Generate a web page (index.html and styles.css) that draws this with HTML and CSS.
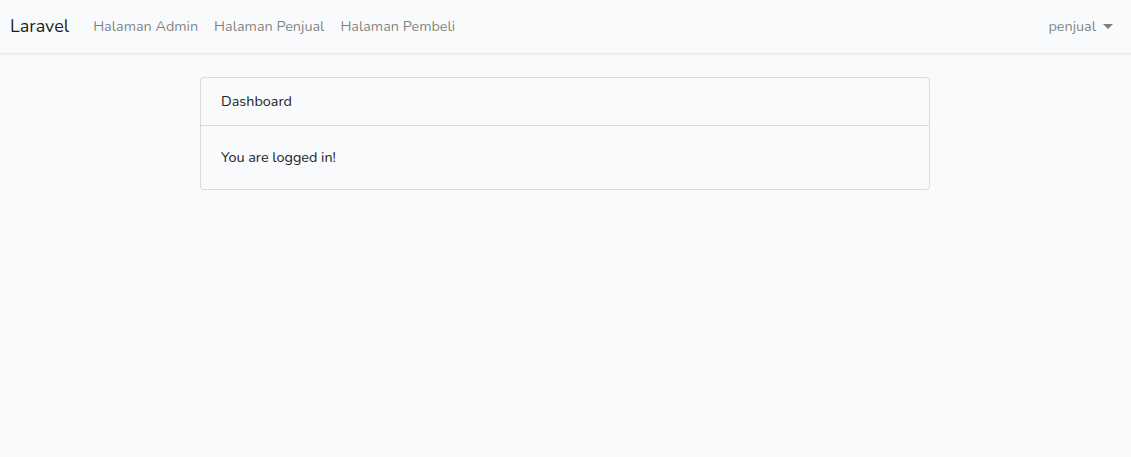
FILE: index.html
```html
<!DOCTYPE html>
<html lang="id">
<head>
<meta charset="utf-8">
<title>Laravel</title>
<link rel="stylesheet" href="styles.css">
</head>
<body>
<nav class="navbar">
  <a class="brand" href="#">Laravel</a>
  <ul class="nav-links">
    <li><a class="nav-link" href="#">Halaman Admin</a></li>
    <li><a class="nav-link" href="#">Halaman Penjual</a></li>
    <li><a class="nav-link" href="#">Halaman Pembeli</a></li>
  </ul>
  <div class="user">
    <a class="nav-link dropdown" href="#">penjual<span class="caret"></span></a>
  </div>
</nav>
<main class="main">
  <div class="card">
    <div class="card-header">Dashboard</div>
    <div class="card-body">You are logged in!</div>
  </div>
</main>
</body>
</html>
```
FILE: styles.css
```css
* { box-sizing: border-box; }
html, body { margin: 0; }
body {
  background: #f8fafc;
  font-family: "Nunito", "Lato", "Noto Sans", sans-serif;
  font-size: 14.4px;
  line-height: 1.6;
  color: #212529;
  height: 457px;
}
a { text-decoration: none; }
.navbar {
  display: flex;
  align-items: center;
  height: 54px;
  padding: 0 10px;
  border-bottom: 1px solid #e5e7ea;
  box-shadow: 0 1px 2px rgba(0,0,0,.04);
}
.brand {
  font-size: 18px;
  color: rgba(0,0,0,.9);
  margin-right: 16px;
  line-height: 1.2;
}
.nav-links {
  display: flex;
  list-style: none;
  margin: 0;
  padding: 0;
  flex: 1;
}
.nav-link {
  display: block;
  padding: 8px;
  color: rgba(0,0,0,.5);
}
.user { display: flex; }
.dropdown { display: flex; align-items: center; }
.caret {
  display: inline-block;
  margin-left: 7px;
  width: 0; height: 0;
  border-top: 5px solid rgba(0,0,0,.5);
  border-left: 5px solid transparent;
  border-right: 5px solid transparent;
}
.main {
  display: flex;
  justify-content: center;
  padding-top: 23px;
  padding-right: 1px;
}
.card {
  width: 730px;
  border: 1px solid rgba(0,0,0,.125);
  border-radius: 4px;
}
.card-header {
  padding: 12px 20px;
  border-bottom: 1px solid rgba(0,0,0,.125);
}
.card-body {
  padding: 20px;
}
```
